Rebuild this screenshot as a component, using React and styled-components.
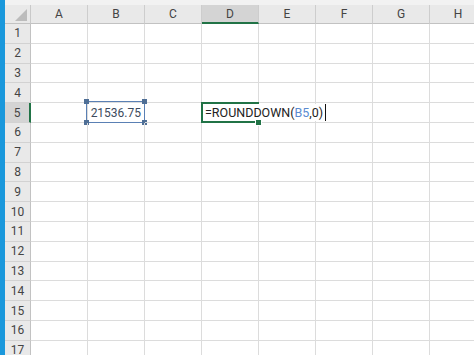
import React from "react";
import styled, { createGlobalStyle, css } from "styled-components";

const Global = createGlobalStyle`
  html, body { margin: 0; padding: 0; background: #fff; overflow: hidden; }
  body { font-family: Roboto, "Noto Sans", "Liberation Sans", sans-serif; }
`;

const Window = styled.div`
  display: flex;
  width: 474px;
  height: 355px;
  overflow: hidden;
`;

const Stripe = styled.div`
  flex: 0 0 5px;
  background: #1a98dc;
`;

const Sheet = styled.div`
  flex: 1;
  display: flex;
  flex-direction: column;
  min-width: 0;
`;

const TopStrip = styled.div`
  height: 5px;
  background: #f2f2f2;
  flex: 0 0 5px;
`;

const Grid = styled.div`
  display: grid;
  grid-template-columns: 26px repeat(8, 57px);
  grid-template-rows: 19px repeat(17, 19.8px);
`;

const Corner = styled.div`
  position: relative;
  background: #e9e9e9;
  border-right: 1px solid #c9c9c9;
  border-bottom: 1px solid #c2c2c2;
  box-sizing: border-box;
  svg { position: absolute; right: 3px; bottom: 2px; }
`;

const ColHead = styled.div`
  box-sizing: border-box;
  background: ${(p) => (p.$active ? "#d4d4d4" : "#e9e9e9")};
  border-right: 1px solid #cdcdcd;
  border-bottom: ${(p) => (p.$active ? "2px solid #217346" : "1px solid #c2c2c2")};
  display: flex;
  align-items: center;
  justify-content: center;
  font-size: 12px;
  color: #444;
  padding-top: ${(p) => (p.$active ? "1px" : "0")};
`;

const RowHead = styled.div`
  box-sizing: border-box;
  background: ${(p) => (p.$active ? "#d4d4d4" : "#e9e9e9")};
  border-bottom: 1px solid #d2d2d2;
  border-right: ${(p) => (p.$active ? "2px solid #217346" : "1px solid #c2c2c2")};
  display: flex;
  align-items: center;
  justify-content: center;
  font-size: 12px;
  color: #444;
`;

const Cell = styled.div`
  position: relative;
  box-sizing: border-box;
  border-right: 1px solid #dcdcdc;
  border-bottom: 1px solid #dcdcdc;
  font-size: 12px;
  color: #333;
  display: flex;
  align-items: center;
  justify-content: flex-end;
  padding-right: 4px;
  ${(p) => p.$over && css`z-index: 2;`}
`;

const RefBox = styled.div`
  position: absolute;
  left: -2px;
  top: -2px;
  right: -1px;
  bottom: -1px;
  border: 1.5px solid #5a80b4;
  pointer-events: none;
`;

const Handle = styled.span`
  position: absolute;
  width: 5px;
  height: 5px;
  background: #4f6f96;
  ${(p) => (p.$v === "t" ? "top: -3px;" : "bottom: -3px;")}
  ${(p) => (p.$h === "l" ? "left: -3px;" : "right: -3px;")}
`;

const RefValue = styled.span`
  color: #3c4a5c;
  position: relative;
  right: -1px;
`;

const ActiveBox = styled.div`
  position: absolute;
  left: -1px;
  top: -1px;
  right: -1px;
  bottom: -1px;
  border: 2px solid #217346;
  pointer-events: none;
  z-index: 3;
`;

const FillHandle = styled.span`
  position: absolute;
  right: -4px;
  bottom: -4px;
  width: 5px;
  height: 5px;
  background: #217346;
  border: 1px solid #fff;
  z-index: 5;
`;

const Editor = styled.div`
  position: absolute;
  left: 1px;
  top: 1px;
  bottom: 1px;
  width: 124px;
  background: #fff;
  display: flex;
  align-items: center;
  padding-left: 2px;
  font-size: 12.5px;
  color: #222;
  white-space: nowrap;
  z-index: 4;
`;

const RefText = styled.span`
  color: #5b8bd0;
`;

const Caret = styled.span`
  display: inline-block;
  width: 1px;
  height: 17px;
  background: #111;
  margin-left: 2px;
`;

const COLS = ["A", "B", "C", "D", "E", "F", "G", "H"];
const ROWS = Array.from({ length: 17 }, (_, i) => i + 1);

export default function App() {
  return (
    <>
      <Global />
      <Window>
        <Stripe />
        <Sheet>
          <TopStrip />
          <Grid>
            <Corner>
              <svg width="12" height="12" viewBox="0 0 12 12">
                <polygon points="12,0 12,12 0,12" fill="#bcbcbc" />
              </svg>
            </Corner>
            {COLS.map((c) => (
              <ColHead key={c} $active={c === "D"}>{c}</ColHead>
            ))}
            {ROWS.map((r) => (
              <React.Fragment key={r}>
                <RowHead $active={r === 5}>{r}</RowHead>
                {COLS.map((c) => {
                  if (r === 5 && c === "B") {
                    return (
                      <Cell key={c}>
                        <RefValue>21536.75</RefValue>
                        <RefBox>
                          <Handle $v="t" $h="l" />
                          <Handle $v="t" $h="r" />
                          <Handle $v="b" $h="l" />
                          <Handle $v="b" $h="r" />
                        </RefBox>
                      </Cell>
                    );
                  }
                  if (r === 5 && c === "D") {
                    return (
                      <Cell key={c} $over>
                        <Editor>
                          =ROUNDDOWN(<RefText>B5</RefText>,0)<Caret />
                        </Editor>
                        <ActiveBox />
                        <FillHandle />
                      </Cell>
                    );
                  }
                  return <Cell key={c} />;
                })}
              </React.Fragment>
            ))}
          </Grid>
        </Sheet>
      </Window>
    </>
  );
}
